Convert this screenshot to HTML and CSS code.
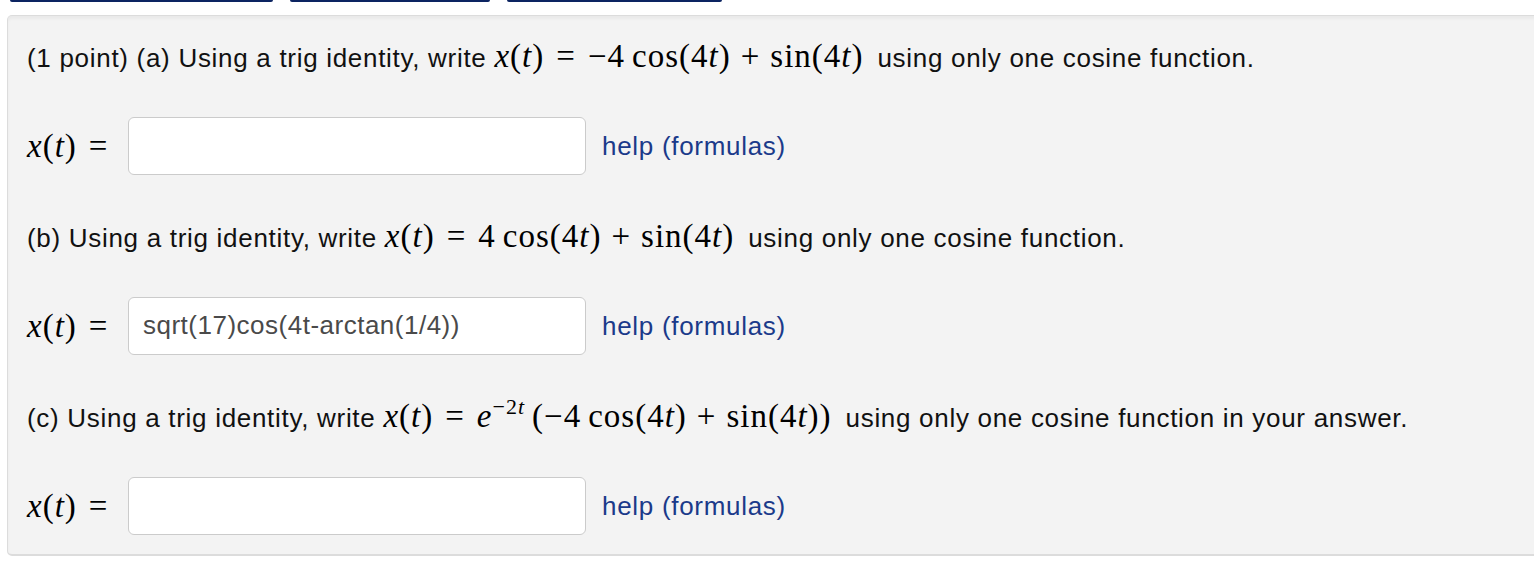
FILE: index.html
```html
<!DOCTYPE html>
<html>
<head>
<meta charset="utf-8">
<link rel="stylesheet" href="styles.css">
</head>
<body>
<div class="tabs">
  <div class="tab tab1"></div>
  <div class="tab tab2"></div>
  <div class="tab tab3"></div>
</div>
<div class="panel">
  <div class="text-row">(1 point) (a) Using a trig identity, write <span class="math"><i>x</i>(<i>t</i>)<span class="rel">=</span>−4<span class="th"></span>cos(4<i>t</i>)<span class="bin">+</span>sin(4<i>t</i>)</span> using only one cosine function.</div>
  <div class="ans-row">
    <span class="math label"><i>x</i>(<i>t</i>)<span class="rel">=</span></span>
    <div class="input"></div>
    <a class="help" href="#">help (formulas)</a>
  </div>
  <div class="text-row">(b) Using a trig identity, write <span class="math"><i>x</i>(<i>t</i>)<span class="rel">=</span>4<span class="th"></span>cos(4<i>t</i>)<span class="bin">+</span>sin(4<i>t</i>)</span> using only one cosine function.</div>
  <div class="ans-row">
    <span class="math label"><i>x</i>(<i>t</i>)<span class="rel">=</span></span>
    <div class="input">sqrt(17)cos(4t-arctan(1/4))</div>
    <a class="help" href="#">help (formulas)</a>
  </div>
  <div class="text-row">(c) Using a trig identity, write <span class="math"><i>x</i>(<i>t</i>)<span class="rel">=</span><i>e</i><sup>−2<i>t</i></sup><span class="th"></span>(−4<span class="th"></span>cos(4<i>t</i>)<span class="bin">+</span>sin(4<i>t</i>))</span> using only one cosine function in your answer.</div>
  <div class="ans-row">
    <span class="math label"><i>x</i>(<i>t</i>)<span class="rel">=</span></span>
    <div class="input"></div>
    <a class="help" href="#">help (formulas)</a>
  </div>
</div>
</body>
</html>
```
FILE: styles.css
```css
html, body {
  margin: 0;
  padding: 0;
  background: #ffffff;
  overflow: hidden;
}
body {
  font-family: "Liberation Sans", Arial, sans-serif;
  color: #111;
}
.tabs {
  display: flex;
  height: 2px;
  padding-left: 10px;
  gap: 17px;
}
.tab {
  height: 2px;
  background: #0c2461;
  border-radius: 0 0 2px 2px;
}
.tab1 { width: 263px; }
.tab2 { width: 200px; }
.tab3 { width: 215px; }
.panel {
  margin: 13px 0 0 7px;
  width: 1560px;
  box-sizing: border-box;
  background: #f3f3f3;
  border: 1px solid #dcdcdc;
  border-bottom-width: 2px;
  border-radius: 5px;
  box-shadow: inset 0 3px 3px rgba(0,0,0,0.04);
  padding: 25px 20px 19px 19px;
  display: flex;
  flex-direction: column;
  gap: 46px;
}
.text-row {
  height: 30px;
  line-height: 30px;
  font-size: 26px;
  letter-spacing: 0.7px;
  white-space: nowrap;
}
.math {
  font-family: "Liberation Serif", "Times New Roman", serif;
  font-size: 33px;
  letter-spacing: 1px;
  color: #000;
  margin: 0 6px 0 0;
}
.math i {
  font-style: italic;
}
.math sup {
  font-size: 22px;
  vertical-align: 13px;
  line-height: 0;
}
.rel {
  margin: 0 12px;
}
.bin {
  margin: 0 10px;
}
.th {
  display: inline-block;
  width: 7px;
}
.ans-row {
  height: 58px;
  display: flex;
  align-items: center;
}
.label {
  width: 95px;
  white-space: nowrap;
}
.input {
  width: 458px;
  height: 58px;
  box-sizing: border-box;
  background: #fff;
  border: 1.5px solid #cbcbcb;
  border-radius: 6px;
  font-size: 26px;
  letter-spacing: 0.5px;
  color: #4a4a4a;
  padding: 0 14px;
  line-height: 55px;
  white-space: nowrap;
}
.help {
  margin-left: 16px;
  font-size: 26px;
  letter-spacing: 0.7px;
  color: #1b3a8a;
  text-decoration: none;
}
```
